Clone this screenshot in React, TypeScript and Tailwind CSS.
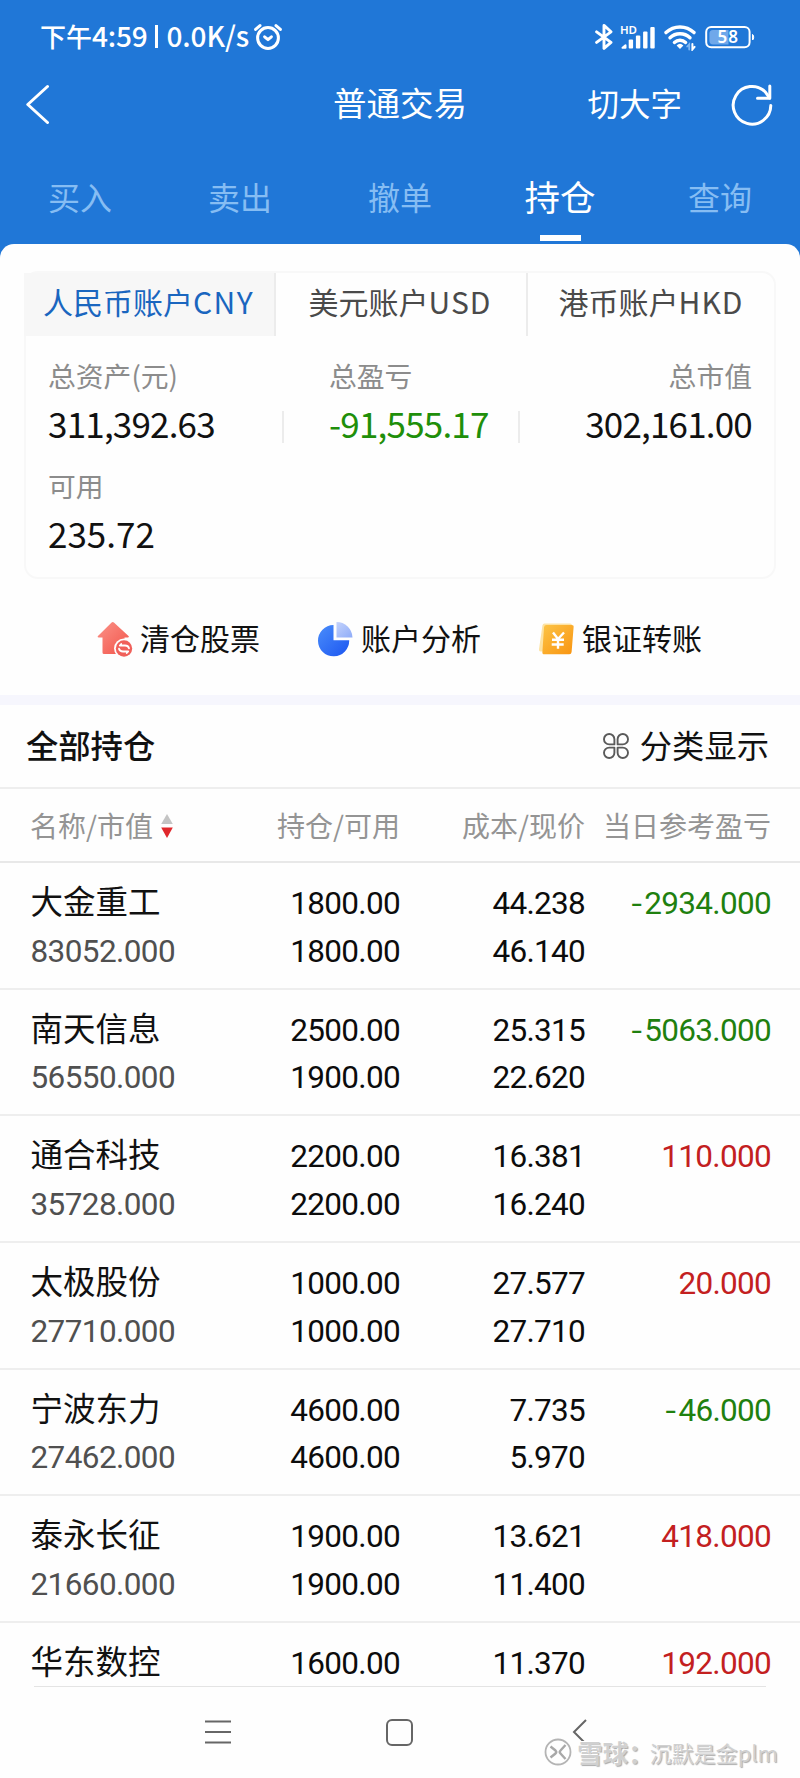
import React from 'react';

const HOLDINGS = [
  { name: '大金重工', value: '83052.000', qty: '1800.00', avail: '1800.00', cost: '44.238', price: '46.140', pnl: '-2934.000' },
  { name: '南天信息', value: '56550.000', qty: '2500.00', avail: '1900.00', cost: '25.315', price: '22.620', pnl: '-5063.000' },
  { name: '通合科技', value: '35728.000', qty: '2200.00', avail: '2200.00', cost: '16.381', price: '16.240', pnl: '110.000' },
  { name: '太极股份', value: '27710.000', qty: '1000.00', avail: '1000.00', cost: '27.577', price: '27.710', pnl: '20.000' },
  { name: '宁波东力', value: '27462.000', qty: '4600.00', avail: '4600.00', cost: '7.735', price: '5.970', pnl: '-46.000' },
  { name: '泰永长征', value: '21660.000', qty: '1900.00', avail: '1900.00', cost: '13.621', price: '11.400', pnl: '418.000' },
  { name: '华东数控', value: '', qty: '1600.00', avail: '', cost: '11.370', price: '', pnl: '192.000' }
];

const TABS = ['买入', '卖出', '撤单', '持仓', '查询'];

const AlarmIcon = () => (
  <svg className="w-7 h-7" viewBox="0 0 28 28" fill="none" stroke="currentColor" strokeWidth="3" strokeLinecap="round" strokeLinejoin="round">
    <circle cx="14" cy="15" r="10.4" />
    <path d="M10.6 13.800l3.400 2.800 3.400-2.800" />
    <path d="M1.6 6.4L6 2.600M26.4 6.4L22 2.600" />
  </svg>
);

const BluetoothIcon = () => (
  <svg className="w-[18px] h-7" viewBox="0 0 18 28" fill="none" stroke="currentColor" strokeWidth="2.9" strokeLinecap="round" strokeLinejoin="round">
    <path d="M1.6 8.8l14.400 10.600L9 25.4V2.400l7 6.400L1.6 19.400" />
  </svg>
);

const SignalIcon = () => (
  <svg className="w-9 h-7" viewBox="0 0 36 28" fill="currentColor">
    <text x="0" y="10.5" fontSize="11.5" fontWeight="600" textLength="17" className="font-['Noto_Sans']">HD</text>
    <path d="M2.500 24.800h3v-2.500z" stroke="currentColor" strokeWidth="2" strokeLinejoin="round" />
    <rect x="8.7" y="16.5" width="4.4" height="9" rx="1" />
    <rect x="15.9" y="12.500" width="4.4" height="13" rx="1" />
    <rect x="23.1" y="8.500" width="4.4" height="17" rx="1" />
    <rect x="30.3" y="4" width="4.4" height="21.500" rx="1" />
  </svg>
);

const WifiIcon = () => (
  <svg className="w-8 h-7" viewBox="0 0 32 28" fill="none" stroke="currentColor" strokeWidth="3.4" strokeLinecap="round">
    <path d="M2 9.6a20.300 20.300 0 0 1 28 0" />
    <path d="M6 14.800a14.500 14.500 0 0 1 20 0" />
    <path d="M10.400 19.400a8.200 8.200 0 0 1 11.200 0" />
    <path d="M16 26l-3.400-3.600a5 5 0 0 1 6.800 0z" fill="currentColor" stroke="none" />
    <path d="M25.2 26.500v-5.200l-2 2.200" stroke="#7db6f2" strokeWidth="1.800" />
    <path d="M28.400 21v5.500l2.200-2.600" strokeWidth="2" />
  </svg>
);

const BatteryIcon = () => (
  <svg className="w-[50px] h-7" viewBox="0 0 50 28" fill="none">
    <rect x="1.2" y="4" width="43.4" height="20.200" rx="5" stroke="currentColor" strokeWidth="2" />
    <path d="M8 7h15.500v14.400H8a3.600 3.600 0 0 1-3.600-3.600V10.600A3.600 3.600 0 0 1 8 7z" fill="#6fa8ea" />
    <path d="M47.500 11.400c1.600.3 1.600 5.300 0 5.600z" fill="currentColor" stroke="currentColor" strokeWidth="1" />
    <text x="22.800" y="20.300" textAnchor="middle" fontSize="17" fontWeight="600" textLength="20.500" fill="currentColor" className="font-['Noto_Sans']">58</text>
  </svg>
);

const HouseIcon = () => (
  <svg className="w-9 h-9" viewBox="0 0 36 36" fill="none">
    <defs>
      <linearGradient id="house" x1="0" y1="0" x2="1" y2="1">
        <stop offset="0" stopColor="#fb9288" />
        <stop offset="1" stopColor="#f2544a" />
      </linearGradient>
    </defs>
    <path d="M14.600 1.500a1.600 1.600 0 0 1 2.300 0L31.500 15c.7.700.3 1.400-.6 1.400H27.500V31.500a1.500 1.500 0 0 1-1.500 1.500H7a1.500 1.500 0 0 1-1.500-1.500V16.400H1.600c-.9 0-1.300-.8-.6-1.500z" fill="url(#house)" />
    <circle cx="27" cy="27.500" r="10" fill="#fefefe" />
    <circle cx="27" cy="27.500" r="8.200" fill="#f0605a" />
    <path d="M32 27.300c-.5-2-2-2.800-4-2.800h-5.200l1.400-1.500M22 27.700c.5 2 2 2.800 4 2.800h5.200l-1.400 1.500" stroke="#fff" strokeWidth="1.800" strokeLinecap="round" strokeLinejoin="round" />
  </svg>
);

const PieIcon = () => (
  <svg className="w-9 h-9" viewBox="0 0 36 36">
    <defs>
      <linearGradient id="pie" x1="0" y1="0" x2="1" y2="1">
        <stop offset="0" stopColor="#4a8dfb" />
        <stop offset="1" stopColor="#1c56f0" />
      </linearGradient>
      <linearGradient id="slice" x1="0" y1="0" x2="1" y2="1">
        <stop offset="0" stopColor="#c3d2fc" />
        <stop offset="1" stopColor="#8facf8" />
      </linearGradient>
    </defs>
    <path d="M15.500 4.100v15.100h15.700A15.600 15.600 0 1 1 15.500 4.100z" fill="url(#pie)" />
    <path d="M18.500 1A16 16 0 0 1 34.500 16.400h-16z" fill="url(#slice)" />
  </svg>
);

const TransferIcon = () => (
  <svg className="w-9 h-9" viewBox="0 0 36 36">
    <defs>
      <linearGradient id="coin" x1="0" y1="0" x2="1" y2="1">
        <stop offset="0" stopColor="#fcc446" />
        <stop offset="1" stopColor="#f99410" />
      </linearGradient>
    </defs>
    <path d="M6 2.500h25a2 2 0 0 1 2 2l-3 24a2 2 0 0 1-2 2H2a2 2 0 0 1-2-2.300L3.400 4.500A2.400 2.400 0 0 1 6 2.500z" fill="#fde3a4" />
    <path d="M7.400 4h25.200a2 2 0 0 1 2 2.300l-2 24.700a2.400 2.400 0 0 1-2.400 2.200H5.400a2 2 0 0 1-2-2.300L5 6.200A2.400 2.400 0 0 1 7.400 4z" fill="url(#coin)" />
    <path d="M14 11.500l5 6.500 6-6.500M13 18.800h12M12.700 23.500h12M19 18v9.800" fill="none" stroke="#fff" strokeWidth="2.400" />
  </svg>
);

const CloverIcon = () => (
  <svg className="w-[26px] h-[26px]" viewBox="0 0 26 26" fill="none" stroke="#5a5a5a" strokeWidth="1.900" strokeLinejoin="round">
    <path d="M11.400 11.400V6.200A5.200 5.200 0 1 0 6.200 11.400z" />
    <path d="M14.600 11.400V6.200a5.200 5.200 0 1 1 5.200 5.200z" />
    <path d="M11.400 14.600v5.200a5.200 5.200 0 1 1-5.200-5.200z" />
    <path d="M14.600 14.600v5.200a5.200 5.200 0 1 0 5.200-5.200z" />
  </svg>
);

const StatusBar = () => (
  <div className="flex h-[74px] items-center justify-between pl-10 pr-[45px]">
    <div className="flex items-center font-medium">
      <span className="-mt-[3px] text-[26px]">下午</span>
      <span className="-mt-[4px] text-[28px] tracking-[-0.2px]">4:59</span>
      <span className="mx-[8px] -mt-[2px] h-[23px] w-[3px] bg-white"></span>
      <span className="-mt-[4px] text-[28px] tracking-[-0.1px]">0.0K/s</span>
      <span className="ml-[5px] -mt-[1px]"><AlarmIcon /></span>
    </div>
    <div className="flex items-center">
      <BluetoothIcon />
      <span className="ml-[7px]"><SignalIcon /></span>
      <span className="ml-[8px]"><WifiIcon /></span>
      <span className="ml-[9px]"><BatteryIcon /></span>
    </div>
  </div>
);

const Header = () => (
  <header className="h-[244px] text-white">
    <StatusBar />
    <div className="grid h-[60px] grid-cols-3 items-center px-[26px]">
      <svg className="w-6 h-10" viewBox="0 0 24 40" fill="none" stroke="currentColor" strokeWidth="3" strokeLinecap="round" strokeLinejoin="round">
        <path d="M21.500 2.500L1.800 20.500l19.700 18" />
      </svg>
      <h1 className="-mt-[4px] text-center text-[33.500px] leading-none">普通交易</h1>
      <div className="flex items-center justify-end">
        <span className="-mt-[3px] mr-[49px] whitespace-nowrap text-[31.500px] leading-none">切大字</span>
        <svg className="mr-[1px] mt-[1px] w-[42px] h-[42px]" viewBox="0 0 42 42" fill="none" stroke="currentColor" strokeWidth="3">
          <path d="M39.800 21.500A18.800 18.800 0 1 1 34.500 8.200l4 5.800" strokeLinecap="round" />
          <path d="M38.800 2v12.300H26.500" strokeLinecap="round" strokeLinejoin="round" />
        </svg>
      </div>
    </div>
    <nav className="grid h-[110px] grid-cols-5 pt-[31px]">
      {TABS.map((tab) => (
        <div key={tab} className="flex flex-col items-center">
          {tab === '持仓' ? (
            <>
              <span className="h-[66px] text-[35.500px] leading-[62px]">{tab}</span>
              <span className="mt-[4px] h-[6px] w-[41px] bg-white"></span>
            </>
          ) : (
            <span className="text-[32px] leading-[62px] text-[#86bdf3]">{tab}</span>
          )}
        </div>
      ))}
    </nav>
  </header>
);

const Stat = ({ label, value, className }: { label: string, value: string, className: string }) => (
  <div className={className}>
    <p className="text-[27.800px] leading-[46px] text-[#8c8c8c]">{label}</p>
    <p className="text-[35px] leading-[50px] tracking-[-0.8px]">{value}</p>
  </div>
);

const AccountCard = () => (
  <section className="mx-[24px] mt-[27px] h-[308px] rounded-[14px] border-2 border-[#f8f8f8]">
    <div className="grid h-[63px] grid-cols-[248px_252px_1fr] text-center text-[30px] leading-[57px] text-[#4a4a4a]">
      <div className="-ml-[2px] bg-[#f7f7f7] pr-[1px] text-[#1a66bf]">人民币账户<span className="tracking-[1.4px]">CNY</span></div>
      <div className="border-l-2 border-[#ececec] pr-[2px]">美元账户<span className="tracking-[1px]">USD</span></div>
      <div className="border-l-2 border-[#ececec]">港币账户<span className="tracking-[1px]">HKD</span></div>
    </div>
    <div className="flex items-end pl-[22px] pr-[22px] pt-[16px] text-[#111]">
      <Stat className="w-[234px]" label="总资产(元)" value="311,392.63" />
      <div className="mb-[5px] h-8 w-[2px] bg-[#ececec]"></div>
      <Stat className="ml-[45px] w-[189px] [&>p:last-child]:text-[#1f8f0a]" label="总盈亏" value="-91,555.17" />
      <div className="mb-[5px] h-8 w-[2px] bg-[#ececec]"></div>
      <Stat className="flex-1 text-right" label="总市值" value="302,161.00" />
    </div>
    <Stat className="pl-[22px] pt-[14px] text-[#111] [&>p:last-child]:tracking-[0px]" label="可用" value="235.72" />
  </section>
);

const Actions = () => (
  <div className="flex h-[116px] items-center pl-[97px] pt-[4px] text-[30px] leading-none text-[#111]">
    <div className="flex w-[221px] items-center gap-[7px]"><HouseIcon /><span className="-mt-[5px]">清仓股票</span></div>
    <div className="flex w-[221px] items-center gap-[7px]"><PieIcon /><span className="-mt-[5px]">账户分析</span></div>
    <div className="flex items-center gap-[7px]"><TransferIcon /><span className="-mt-[5px]">银证转账</span></div>
  </div>
);

const COLS = 'grid grid-cols-[200px_200px_185px_186px]';

const Pnl = ({ value }: { value: string }) => {
  const loss = value.startsWith('-');
  return (
    <div className={loss ? 'text-[#1f800f]' : 'text-[#c3201f]'}>
      {loss && <span className="mr-[3px] inline-block origin-right scale-x-[1.2]">-</span>}
      {loss ? value.slice(1) : value}
    </div>
  );
};

const HoldingRow = ({ row }: { row: typeof HOLDINGS[number] }) => (
  <div className={`${COLS} h-[126.700px] shrink-0 border-b-2 border-[#eeeeee] pt-[17px] text-right font-['Roboto'] text-[31.500px] font-[450] leading-[47.500px] tracking-[-0.700px] text-[#0c0c0c]`}>
    <div className="pl-[30.500px] text-left">
      <p className="-mt-[4px] mb-[4px] font-['Noto_Sans_CJK_SC'] text-[32.500px] font-normal tracking-normal text-[#111]">{row.name}</p>
      <p className="font-normal tracking-[-0.600px] text-[#505050]">{row.value}</p>
    </div>
    <div>
      <p>{row.qty}</p>
      <p>{row.avail}</p>
    </div>
    <div>
      <p>{row.cost}</p>
      <p>{row.price}</p>
    </div>
    <Pnl value={row.pnl} />
  </div>
);

const Holdings = () => (
  <section>
    <div className="flex h-[84px] items-center justify-between border-b-2 border-[#eeeeee] pl-[26px] pr-[31px] text-[32.300px] leading-none text-[#111]">
      <h2 className="-mt-[4px] font-medium">全部持仓</h2>
      <div className="flex items-center gap-[11px]"><CloverIcon /><span className="-mt-[4px]">分类显示</span></div>
    </div>
    <div className={`${COLS} h-[74px] border-b-2 border-[#e8e8e8] text-right text-[28px] leading-[72px] text-[#949494]`}>
      <div className="flex items-center pl-[30px]">
        <span>名称/市值</span>
        <svg className="ml-[8px] mt-[2px] w-3 h-6" viewBox="0 0 12 24">
          <path d="M6 0l5.800 10H.2z" fill="#c4c4c4" />
          <path d="M6 24l5.800-10.500H.2z" fill="#e0282c" />
        </svg>
      </div>
      <div>持仓/可用</div>
      <div>成本/现价</div>
      <div className="whitespace-nowrap">当日参考盈亏</div>
    </div>
    <div className="flex h-[823px] flex-col overflow-hidden">
      {HOLDINGS.map((row) => <HoldingRow key={row.name} row={row} />)}
    </div>
    <div className="mx-[34px] h-px bg-[#e4e4e4]"></div>
  </section>
);

const Watermark = () => (
  <div className="absolute bottom-[10px] right-[22px] flex items-center text-[22px] leading-[32px] text-[#d0d0d0] [text-shadow:-1px_-1px_0_#fff,1px_1px_1px_#aaa]">
    <svg className="mr-[5px] w-[28px] h-[28px]" viewBox="0 0 28 28" fill="none">
      <circle cx="14" cy="14" r="12.500" fill="#fefefe" stroke="#b4b4b4" strokeWidth="1.800" />
      <path d="M6.500 8.500l5 4q1.500 1.500 0 3l-5 4M21.500 7l-5 5.500q-1.500 1.500 0 3l5 5.500" stroke="#a8a8a8" strokeWidth="2.400" />
    </svg>
    <span className="text-[25.500px] font-bold">雪球：</span>
    <span className="-ml-[4px]">沉默是金plm</span>
  </div>
);

const NavBar = () => (
  <footer className="relative flex-1 text-[#666]">
    <div className="flex items-center pl-[205px] pt-[31px]">
      <svg className="w-[26px] h-7" viewBox="0 0 26 28" stroke="currentColor" strokeWidth="2">
        <path d="M0 3.500h26M0 14h26M0 24.500h26" />
      </svg>
      <div className="ml-[155px] h-[27px] w-[27px] rounded-[6px] border-2 border-[#666]"></div>
      <svg className="ml-[159px] w-4 h-7" viewBox="0 0 16 28" fill="none" stroke="currentColor" strokeWidth="2">
        <path d="M14 2L2 14l12 12" />
      </svg>
    </div>
    <Watermark />
  </footer>
);

const App: React.FC = () => {
  return (
    <div className="h-[1778px] w-[800px] overflow-hidden bg-[#2077d7] font-['Noto_Sans_CJK_SC',sans-serif]">
      <Header />
      <main className="flex h-[1534px] flex-col overflow-hidden rounded-t-[14px] bg-[#fefefe]">
        <AccountCard />
        <Actions />
        <div className="h-[10px] bg-[#f6f6fd]"></div>
        <Holdings />
        <NavBar />
      </main>
    </div>
  );
};

export default App;
